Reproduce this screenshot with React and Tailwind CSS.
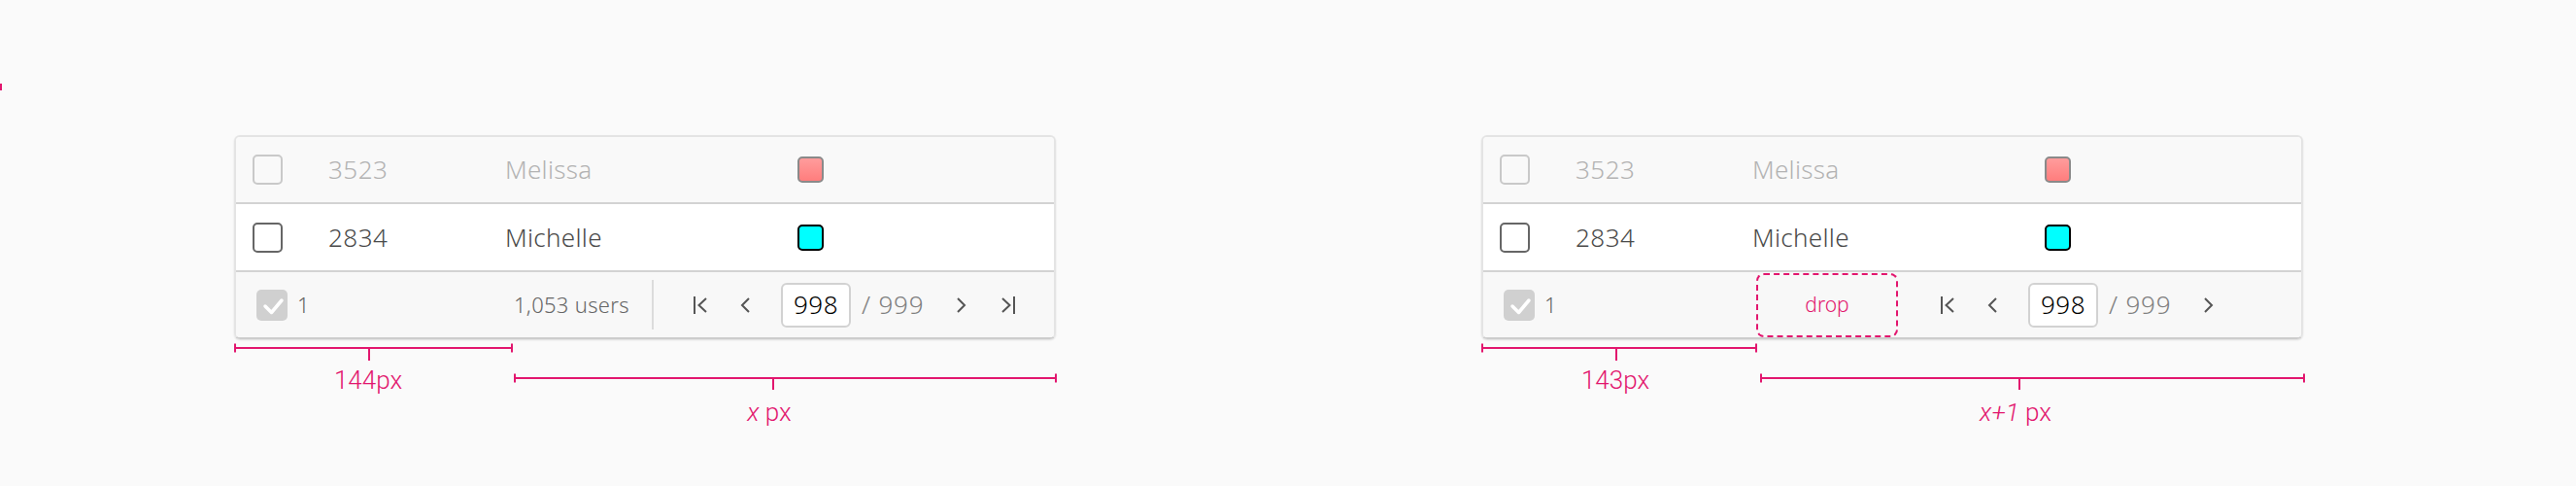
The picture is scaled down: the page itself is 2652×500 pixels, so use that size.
import React from 'react';

const PINK = '#e2166e';
const SANS = { fontFamily: '"Noto Sans", "Open Sans", sans-serif' };
const LABEL = { fontFamily: 'Roboto, "Noto Sans", sans-serif' };

function Checkbox({ faded }) {
  return (
    <div
      className={`h-[31px] w-[31px] rounded-[5px] border-2 ${
        faded ? 'border-[#c9c9c9]' : 'border-[#666666]'
      }`}
    />
  );
}

function CheckedBox() {
  return (
    <div className="flex h-[32px] w-[32px] items-center justify-center rounded-[5px] bg-[#d0d0d0]">
      <svg width="32" height="32" viewBox="0 0 32 32" fill="none">
        <polyline
          points="9,17 15.5,23.5 26,11"
          stroke="#ffffff"
          strokeWidth="3.5"
          strokeLinecap="round"
          strokeLinejoin="round"
        />
      </svg>
    </div>
  );
}

function Row({ id, name, faded }) {
  return (
    <div
      className={`grid grid-cols-[78px_182px_301px_auto] items-center pl-[17px] text-[26px] font-light ${
        faded ? 'h-[67px] bg-[#f9f9f9] text-[#b3b3b3]' : 'h-[68px] bg-white text-[#4a4a4a]'
      }`}
    >
      <Checkbox faded={faded} />
      <span className="tracking-[0.5px]">{id}</span>
      <span className="tracking-[0.3px]">{name}</span>
      {faded ? (
        <div className="h-[27px] w-[27px] rounded-[5px] border-2 border-[#8a8a8a] bg-gradient-to-b from-[#ff9c9c] to-[#ff7d7d]" />
      ) : (
        <div className="h-[27px] w-[27px] rounded-[5px] border-2 border-black bg-[#00ffff]" />
      )}
    </div>
  );
}

function IconFirst() {
  return (
    <svg width="16" height="20" viewBox="0 0 16 20" fill="none" stroke="#555555" strokeWidth="2">
      <line x1="2" y1="1" x2="2" y2="19" />
      <polyline points="14,3 6.5,10 14,17" />
    </svg>
  );
}

function IconPrev() {
  return (
    <svg width="12" height="20" viewBox="0 0 12 20" fill="none" stroke="#555555" strokeWidth="2">
      <polyline points="10,3 3,10 10,17" />
    </svg>
  );
}

function IconNext() {
  return (
    <svg width="12" height="20" viewBox="0 0 12 20" fill="none" stroke="#555555" strokeWidth="2">
      <polyline points="2,3 9,10 2,17" />
    </svg>
  );
}

function IconLast() {
  return (
    <svg width="16" height="20" viewBox="0 0 16 20" fill="none" stroke="#555555" strokeWidth="2">
      <polyline points="3,3 10.5,10 3,17" />
      <line x1="15" y1="1" x2="15" y2="19" />
    </svg>
  );
}

function Pager({ showLast }) {
  return (
    <div className="flex items-center">
      <IconFirst />
      <div className="ml-[32px]">
        <IconPrev />
      </div>
      <div className="ml-[31px] flex h-[46px] w-[72px] items-center justify-center rounded-[6px] border-2 border-[#d2d2d2] bg-white text-[26px] font-light tracking-[0.5px] text-black">
        998
      </div>
      <span className="ml-[11px] w-[65px] whitespace-nowrap text-[26px] font-light tracking-[0.8px] text-[#808080]">
        / 999
      </span>
      <div className="ml-[32px]">
        <IconNext />
      </div>
      {showLast && (
        <div className="ml-[33px]">
          <IconLast />
        </div>
      )}
    </div>
  );
}

function Table({ variant }) {
  const isDrop = variant === 'drop';
  return (
    <div
      className="w-[846px] overflow-hidden rounded-[6px] border-2 border-[#e4e4e4] border-b-[#cdcdcd] shadow-[0_1px_2px_rgba(0,0,0,0.12)]"
      style={SANS}
    >
      <Row id="3523" name="Melissa" faded />
      <div className="h-[2px] bg-[#d3d3d3]" />
      <Row id="2834" name="Michelle" />
      <div className="h-[2px] bg-[#d3d3d3]" />

      {/* Footer */}
      <div className="flex h-[67px] items-center bg-[#f8f8f8]">
        <div className={`flex items-center pl-[21px] ${isDrop ? 'w-[281px]' : 'w-[286px]'}`}>
          <CheckedBox />
          <span className="ml-[10px] text-[22px] font-light text-[#666666]">1</span>
        </div>

        {isDrop ? (
          <>
            <div
              className="flex h-[66px] w-[146px] items-center justify-center rounded-[8px] border-2 border-dashed text-[21px] font-light"
              style={{ borderColor: PINK, color: PINK }}
            >
              drop
            </div>
            <div className="ml-[43px]">
              <Pager />
            </div>
          </>
        ) : (
          <>
            <span className="w-[116px] whitespace-nowrap text-[22px] font-light tracking-[0.3px] text-[#666666]">
              1,053 users
            </span>
            <div className="ml-[26px] h-[51px] w-[2px] bg-[#dcdcdc]" />
            <div className="ml-[40px]">
              <Pager showLast />
            </div>
          </>
        )}
      </div>
    </div>
  );
}

function MeasureA({ colWidth, lineWidth, label }) {
  const tick = 139;
  return (
    <div className="flex flex-col" style={{ width: colWidth }}>
      <svg width={lineWidth} height="23" fill="none" stroke={PINK} strokeWidth="2">
        <line x1="0" y1="9" x2={lineWidth} y2="9" />
        <line x1="1" y1="4.5" x2="1" y2="13.5" />
        <line x1={lineWidth - 1} y1="4.5" x2={lineWidth - 1} y2="13.5" />
        <line x1={tick} y1="9" x2={tick} y2="22" />
      </svg>
      <div
        className="mt-[4px] w-[276px] text-center text-[26px] font-light leading-[30px]"
        style={{ ...LABEL, color: PINK }}
      >
        {label}
      </div>
    </div>
  );
}

function MeasureB({ lineWidth, children }) {
  const tick = 267;
  return (
    <div className="mt-[32px] flex flex-col">
      <svg width={lineWidth} height="21" fill="none" stroke={PINK} strokeWidth="2">
        <line x1="0" y1="8" x2={lineWidth} y2="8" />
        <line x1="1" y1="3.5" x2="1" y2="12.5" />
        <line x1={lineWidth - 1} y1="3.5" x2={lineWidth - 1} y2="12.5" />
        <line x1={tick} y1="8" x2={tick} y2="20" />
      </svg>
      <div
        className="mt-[7px] w-[526px] text-center text-[26px] font-light leading-[30px]"
        style={{ ...LABEL, color: PINK }}
      >
        {children}
      </div>
    </div>
  );
}

export default function App() {
  return (
    <div className="h-[500px] w-[2652px] overflow-hidden bg-[#fafafa]">
      <div className="mt-[86px] h-[7px] w-[2px]" style={{ backgroundColor: PINK }} />

      <div className="mt-[46px] flex pl-[241px]">
        {/* Before */}
        <div className="flex w-[848px] flex-col">
          <Table variant="count" />
          <div className="flex items-start">
            <MeasureA colWidth={288} lineWidth={287} label="144px" />
            <MeasureB lineWidth={559}>
              <span className="italic">x</span> px
            </MeasureB>
          </div>
        </div>

        {/* After */}
        <div className="ml-[436px] flex w-[848px] flex-col">
          <Table variant="drop" />
          <div className="flex items-start">
            <MeasureA colWidth={287} lineWidth={284} label="143px" />
            <MeasureB lineWidth={561}>
              <span className="italic">x+1</span> px
            </MeasureB>
          </div>
        </div>
      </div>
    </div>
  );
}
